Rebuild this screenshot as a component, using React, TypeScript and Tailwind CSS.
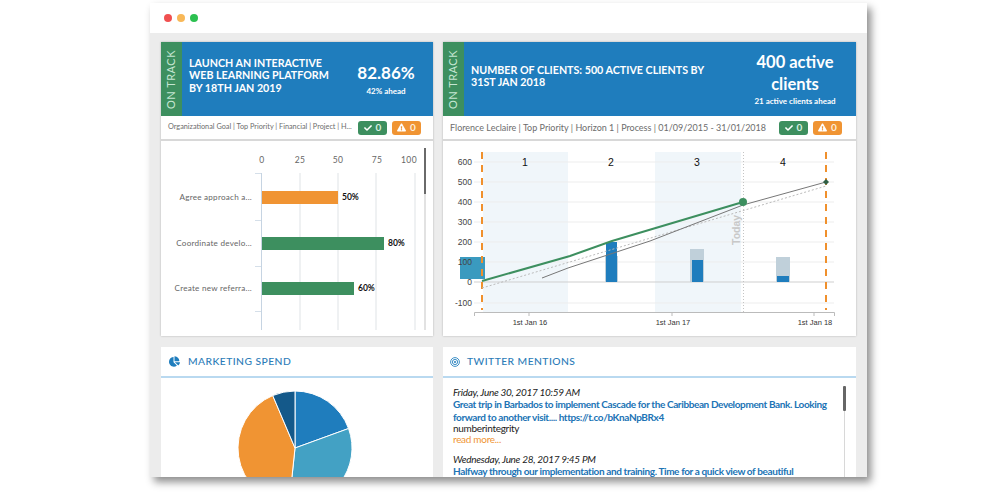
import { FaCheck, FaExclamationTriangle, FaChartPie } from "react-icons/fa";

const sans = "[font-family:Lato,'Noto_Sans',sans-serif]";

function Badges({ className }: { className: string }) {
  return (
    <div className={`flex shrink-0 gap-[5px] ${className}`}>
      <span className="flex h-[14px] w-[29px] items-center justify-center gap-[4px] rounded-[3px] bg-[#3d8f5f] text-[10px] font-bold text-[#d8efe0]">
        <FaCheck className="h-[8px] w-[8px] text-white" /> 0
      </span>
      <span className="flex h-[14px] w-[29px] items-center justify-center gap-[4px] rounded-[3px] bg-[#f09433] text-[10px] font-bold text-[#fdeedd]">
        <FaExclamationTriangle className="h-[9px] w-[9px] text-white" /> 0
      </span>
    </div>
  );
}

function Banner({ title, value, sub, meta, valueClass, valueWidth, titleTop, metaClass, badgeClass }: { title: string[]; value: string[]; sub: string; meta: string; valueClass: string; valueWidth: string; titleTop: string; metaClass: string; badgeClass: string }) {
  return (
    <>
      <div className="flex h-[74px] shrink-0 bg-[#1f7dbd] text-white">
        <div className="flex w-[21px] shrink-0 items-center justify-center bg-[#3d8f5f]">
          <span className="rotate-180 text-[11px] tracking-[0.5px] text-[#c5e6d2] [writing-mode:vertical-rl]">ON TRACK</span>
        </div>
        <div className={`flex-1 pl-[7px] text-[10.7px] leading-[12.4px] font-bold whitespace-nowrap ${titleTop}`}>
          {title.map((t) => (
            <div key={t}>{t}</div>
          ))}
        </div>
        <div className={`flex shrink-0 flex-col items-center justify-center text-center ${valueWidth}`}>
          {value.map((v) => (
            <div key={v} className={`font-bold ${valueClass}`}>{v}</div>
          ))}
          <div className="text-[8px] leading-[12px] font-bold">{sub}</div>
        </div>
      </div>
      <div className="flex h-[25px] w-full shrink-0 items-center justify-between border-b-2 border-[#d8d8d8] pl-[7px] text-[#6d6d6d]">
        <span className={`min-w-0 whitespace-nowrap ${metaClass}`}>{meta}</span>
        <Badges className={badgeClass} />
      </div>
    </>
  );
}

function BarChart() {
  const ox = 161;
  const oy = 141;
  const ticks = [
    ["0", 262],
    ["25", 300],
    ["50", 338],
    ["75", 377],
    ["100", 409],
  ] as const;
  const bars = [
    ["Agree approach a...", 191, 338, "#f09433", "50%", 197],
    ["Coordinate develo...", 237, 384, "#3d8f5f", "80%", 243],
    ["Create new referra...", 282, 354, "#3d8f5f", "60%", 288],
  ] as const;
  return (
    <svg width="272" height="195" viewBox={`${ox} ${oy} 272 195`} className="block shrink-0" fontFamily="Lato, sans-serif">
      {[300, 338, 376, 415].map((x) => (
        <line key={x} x1={x} x2={x} y1={173} y2={330} stroke="#dfe3e6" strokeWidth="1" />
      ))}
      <line x1={261.5} x2={261.5} y1={173} y2={330} stroke="#c6d4e2" />
      {[173, 220, 266, 311].map((y) => (
        <line key={y} x1={255} x2={261} y1={y + 0.5} y2={y + 0.5} stroke="#d5dfe9" />
      ))}
      {ticks.map(([t, x]) => (
        <text key={t} x={x} y={163} fontSize="8.5" letterSpacing="0.4" fill="#666" textAnchor="middle">{t}</text>
      ))}
      {bars.map(([label, y, x2, color, pct, ty]) => (
        <g key={label}>
          <text x={252} y={y + 9} fontSize="8.1" letterSpacing="0.25" fill="#666" textAnchor="end">{label}</text>
          <rect x={262} y={y} width={x2 - 262} height={13} fill={color} />
          <text x={x2 + 4} y={ty + 3} fontSize="8.5" fontWeight="700" fill="#111">{pct}</text>
        </g>
      ))}
      <line x1={425} x2={425} y1={148} y2={330} stroke="#e2e2e2" strokeWidth="2" />
      <line x1={425} x2={425} y1={148} y2={194} stroke="#6a6a6a" strokeWidth="2" />
    </svg>
  );
}

function LineChart() {
  const ox = 443;
  const oy = 141;
  const rows = [
    ["600", 162],
    ["500", 182],
    ["400", 202],
    ["300", 222],
    ["200", 242],
    ["100", 262],
    ["0", 282],
    ["-100", 303],
  ] as const;
  return (
    <svg width="413" height="195" viewBox={`${ox} ${oy} 413 195`} className="block shrink-0" fontFamily="'Liberation Sans', sans-serif">
      <rect x={483} y={152} width={85} height={160} fill="#f0f6fa" />
      <rect x={655} y={152} width={86} height={160} fill="#f0f6fa" />
      {rows.map(([, y]) => (
        <line key={y} x1={474} x2={834} y1={y} y2={y} stroke={y === 282 ? "#cfcfcf" : "#ededed"} strokeWidth="1" />
      ))}
      <rect x={460} y={257} width={25} height={22} fill="#3a9abf" />
      {rows.map(([t, y]) => (
        <text key={t} x={472} y={y + 3} fontSize="8.5" fill="#444" textAnchor="end">{t}</text>
      ))}
      {[["1", 525], ["2", 611], ["3", 697], ["4", 783]].map(([t, x]) => (
        <text key={t} x={x} y={166} fontSize="10.5" fill="#111" textAnchor="middle">{t}</text>
      ))}
      <rect x={605} y={256} width={13} height={26} fill="#c0d0da" />
      <rect x={606} y={242} width={11} height={40} fill="#1f7dbd" />
      <rect x={690} y={249} width={14} height={33} fill="#c0d0da" />
      <rect x={692} y={260} width={11} height={22} fill="#1f7dbd" />
      <rect x={776} y={257} width={14} height={25} fill="#c0d0da" />
      <rect x={777} y={276} width={12} height={6} fill="#1f7dbd" />
      <line x1={743.5} x2={743.5} y1={152} y2={312} stroke="#c4c4c4" strokeDasharray="1 2" />
      <text transform="translate(740 245) rotate(-90)" fontSize="10.5" fontWeight="700" fill="#c8c8c8">Today</text>
      <line x1={482} x2={482} y1={152} y2={310} stroke="#f0902c" strokeWidth="2" strokeDasharray="7 6" />
      <line x1={826} x2={826} y1={152} y2={310} stroke="#f0902c" strokeWidth="2" strokeDasharray="7 6" />
      <polyline points="482,288 826,186" fill="none" stroke="#bbb" strokeDasharray="2 2" />
      <polyline points="542,278 568,268 650,241 743,205 826,182" fill="none" stroke="#777" />
      <polyline points="482,281 570,256 612,241 743,202" fill="none" stroke="#3d8f5f" strokeWidth="2" />
      <circle cx={743} cy={202} r={4} fill="#3d8f5f" />
      <path d="M826 179 L829 182 L826 185 L823 182 Z" fill="#2f5f45" />
      <path d="M474.5 316 V312.5 H834.5 V316" fill="none" stroke="#bbb" />
      {[[529, "1st Jan 16"], [672, "1st Jan 17"], [814, "1st Jan 18"]].map(([x, t]) => (
        <g key={t as string}>
          <line x1={x as number} x2={x as number} y1={312} y2={316} stroke="#bbb" />
          <text x={(x as number) + 1} y={325} fontSize="7.5" fill="#333" textAnchor="middle">{t}</text>
        </g>
      ))}
    </svg>
  );
}

function PieChart() {
  const cx = 134;
  const cy = 70;
  const r = 57;
  const pt = (deg: number) => {
    const a = (deg * Math.PI) / 180;
    return `${(cx + r * Math.sin(a)).toFixed(2)} ${(cy - r * Math.cos(a)).toFixed(2)}`;
  };
  const slices: [number, number, string][] = [
    [0, 70, "#1f7dbd"],
    [70, 186, "#43a1c4"],
    [186, 337, "#f09433"],
    [337, 360, "#14598a"],
  ];
  return (
    <svg width="272" height="128" viewBox="0 0 272 128" className="block shrink-0">
      {slices.map(([a, b, c]) => (
        <path key={c} d={`M${cx} ${cy} L${pt(a)} A${r} ${r} 0 ${b - a > 180 ? 1 : 0} 1 ${pt(b)} Z`} fill={c} stroke="#fff" strokeWidth="1" />
      ))}
    </svg>
  );
}

function SectionHead({ icon, title }: { icon: React.ReactNode; title: string }) {
  return (
    <div className="flex h-[31px] shrink-0 items-center gap-[7px] border-b-2 border-[#b9d9f0] pl-[8px] text-[10.3px] font-medium tracking-[0.45px] text-[#2c7cb8]">
      {icon}
      <span>{title}</span>
    </div>
  );
}

function Tweets() {
  return (
    <div className="relative flex-1 overflow-hidden pt-[8px] pl-[10px] text-[10px] tracking-[-0.3px] text-[#222]">
      <div className="w-[385px]">
        <div className="leading-[12px] italic">Friday, June 30, 2017 10:59 AM</div>
        <div className="leading-[12.5px] font-bold tracking-[-0.38px] text-[#2073b5]">
          <div className="whitespace-nowrap">Great trip in Barbados to implement Cascade for the Caribbean Development Bank. Looking</div>
          <div className="whitespace-nowrap">forward to another visit.... https://t.co/bKnaNpBRx4</div>
        </div>
        <div className="leading-[11px]">numberintegrity</div>
        <div className="leading-[10px] text-[#f09433]">read more...</div>
        <div className="mt-[9px] leading-[12px] italic">Wednesday, June 28, 2017 9:45 PM</div>
        <div className="leading-[12.5px] font-bold tracking-[-0.38px] whitespace-nowrap text-[#2073b5]">Halfway through our implementation and training. Time for a quick view of beautiful</div>
      </div>
      <div className="absolute top-[8px] right-[11px] bottom-0 w-[1px] bg-[#d8d8d8]" />
      <div className="absolute top-[8px] right-[10px] h-[25px] w-[3px] rounded-[1px] bg-[#666]" />
    </div>
  );
}

export default function App() {
  return (
    <div className={`h-[500px] w-[1000px] overflow-hidden bg-white pt-[3px] pl-[150px] ${sans}`}>
      <div className="flex h-[474px] w-[717px] flex-col overflow-hidden bg-[#ececec] shadow-[4px_5px_8px_rgba(0,0,0,0.45)]">
        <div className="flex h-[30px] shrink-0 items-center gap-[5px] bg-white pl-[14px]">
          <span className="h-[8px] w-[8px] rounded-full bg-[#f05050]" />
          <span className="h-[8px] w-[8px] rounded-full bg-[#f8b858]" />
          <span className="h-[8px] w-[8px] rounded-full bg-[#2cc050]" />
        </div>
        <div className="grid grid-cols-[272px_413px] grid-rows-[294px_130px] gap-x-[10px] gap-y-[11px] pt-[9px] pl-[11px]">
          <div className="flex min-w-0 flex-col bg-white shadow-[0_0_2px_rgba(0,0,0,0.25)]">
            <Banner
              title={["LAUNCH AN INTERACTIVE", "WEB LEARNING PLATFORM", "BY 18TH JAN 2019"]}
              value={["82.86%"]}
              valueClass="text-[17px] leading-[24px]"
              valueWidth="w-[92px] pr-[2px]"
              titleTop="pt-[15px]"
              sub="42% ahead"
              meta="Organizational Goal | Top Priority | Financial | Project | H..."
              metaClass="text-[7.3px]"
              badgeClass="mr-[12px]"
            />
            <BarChart />
          </div>
          <div className="flex min-w-0 flex-col bg-white shadow-[0_0_2px_rgba(0,0,0,0.25)]">
            <Banner
              title={["NUMBER OF CLIENTS: 500 ACTIVE CLIENTS BY", "31ST JAN 2018"]}
              value={["400 active", "clients"]}
              valueClass="text-[16.5px] leading-[22px]"
              valueWidth="w-[122px]"
              titleTop="pt-[22px]"
              sub="21 active clients ahead"
              meta="Florence Leclaire | Top Priority | Horizon 1 | Process | 01/09/2015 - 31/01/2018"
              metaClass="text-[9px]"
              badgeClass="mr-[14px]"
            />
            <LineChart />
          </div>
          <div className="flex min-w-0 flex-col overflow-hidden bg-white">
            <SectionHead icon={<FaChartPie className="mr-[1px] h-[11px] w-[11px] text-[#1f7dbd]" />} title="MARKETING SPEND" />
            <PieChart />
          </div>
          <div className="flex min-w-0 flex-col overflow-hidden bg-white">
            <SectionHead
              icon={
                <svg width="10" height="10" viewBox="0 0 10 10" className="-ml-[1px]">
                  <circle cx="5" cy="5" r="4.4" fill="none" stroke="#3d8fc6" strokeWidth="1" />
                  <circle cx="5" cy="5" r="2.6" fill="none" stroke="#3d8fc6" strokeWidth="1" />
                  <circle cx="5" cy="5" r="1" fill="#1f7dbd" />
                </svg>
              }
              title="TWITTER MENTIONS"
            />
            <Tweets />
          </div>
        </div>
      </div>
    </div>
  );
}
